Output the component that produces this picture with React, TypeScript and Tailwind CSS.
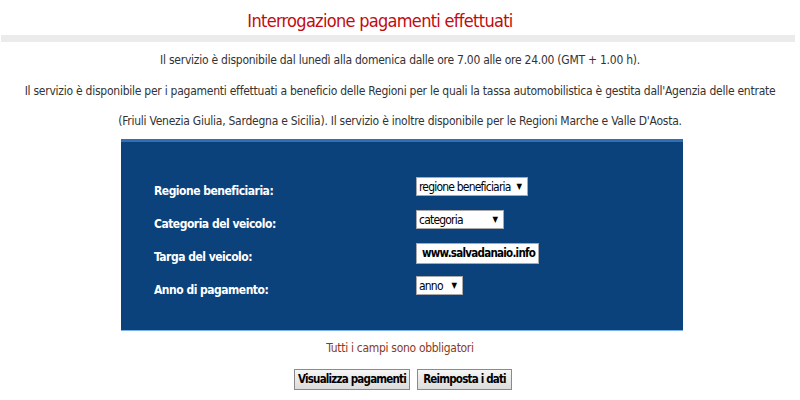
const font = { fontFamily: '"DejaVu Sans Condensed", "DejaVu Sans", sans-serif' };

function FakeSelect({ label, width }: { label: string; width: string }) {
  return (
    <div
      className={`flex h-[19px] items-center justify-between whitespace-nowrap border border-[#a9a9a9] bg-white pl-[2px] pr-[5px] text-[12px] text-black ${width}`}
    >
      <span className="tracking-[-0.8px]">{label}</span>
      <span className="text-[8px]">▼</span>
    </div>
  );
}

const rows = [
  { label: "Regione beneficiaria:", field: <FakeSelect label="regione beneficiaria" width="w-[112px]" /> },
  { label: "Categoria del veicolo:", field: <FakeSelect label="categoria" width="w-[88px]" /> },
  {
    label: "Targa del veicolo:",
    field: (
      <div className="flex h-[21px] w-[123px] items-center whitespace-nowrap border border-[#a9a9a9] bg-white pl-[5px] text-[11.5px] font-bold text-black tracking-[-0.75px]">
        www.salvadanaio.info
      </div>
    ),
  },
  { label: "Anno di pagamento:", field: <FakeSelect label="anno" width="w-[47px]" /> },
];

export default function App() {
  return (
    <div className="h-[400px] w-[800px] overflow-hidden bg-white" style={font}>
      <h1 className="pr-[40px] pt-[8px] text-center text-[18px] leading-[25px] text-[#c20a10] tracking-[-0.7px]">
        Interrogazione pagamenti effettuati
      </h1>
      <div className="ml-[1px] mr-[5px] mt-[2px] h-[7px] bg-[#ebebeb]" />

      <div className="text-center text-[12px] text-[#333] tracking-[-0.25px]">
        <p className="mt-[10px] leading-[16px]">
          Il servizio è disponibile dal lunedì alla domenica dalle ore 7.00 alle ore 24.00 (GMT + 1.00 h).
        </p>
        <p className="mt-[8px] leading-[30px]">
          Il servizio è disponibile per i pagamenti effettuati a beneficio delle Regioni per le quali la tassa
          automobilistica è gestita dall'Agenzia delle entrate
          <br />
          (Friuli Venezia Giulia, Sardegna e Sicilia). Il servizio è inoltre disponibile per le Regioni Marche e
          Valle D'Aosta.
        </p>
      </div>

      {/* form panel */}
      <div className="ml-[121px] mt-[3px] h-[192px] w-[562px] border-t-[3px] border-b border-t-[#2f6fb5] border-b-[#7fb2ea] bg-[#0b427c] pl-[33px] pt-[35px]">
        <div className="grid grid-cols-[262px_auto] gap-y-[11px]">
          {rows.map((r) => (
            <div key={r.label} className="contents">
              <div className="whitespace-nowrap pt-[6px] text-[12px] leading-[16px] font-bold text-white tracking-[-0.5px]">
                {r.label}
              </div>
              <div>{r.field}</div>
            </div>
          ))}
        </div>
      </div>

      <p className="mt-[8px] text-center text-[12px] text-[#8b3a1e] tracking-[-0.3px]">Tutti i campi sono obbligatori</p>

      <div className="mt-[12px] flex justify-center gap-[7px] pl-[6px]">
        <button className="h-[21px] w-[116px] whitespace-nowrap border border-[#8a8a8a] bg-gradient-to-b from-[#f6f6f6] to-[#dcdcdc] text-[11.5px] font-bold text-black tracking-[-0.8px]">
          Visualizza pagamenti
        </button>
        <button className="h-[21px] w-[95px] whitespace-nowrap border border-[#8a8a8a] bg-gradient-to-b from-[#f6f6f6] to-[#dcdcdc] text-[11.5px] font-bold text-black tracking-[-0.8px]">
          Reimposta i dati
        </button>
      </div>
    </div>
  );
}
